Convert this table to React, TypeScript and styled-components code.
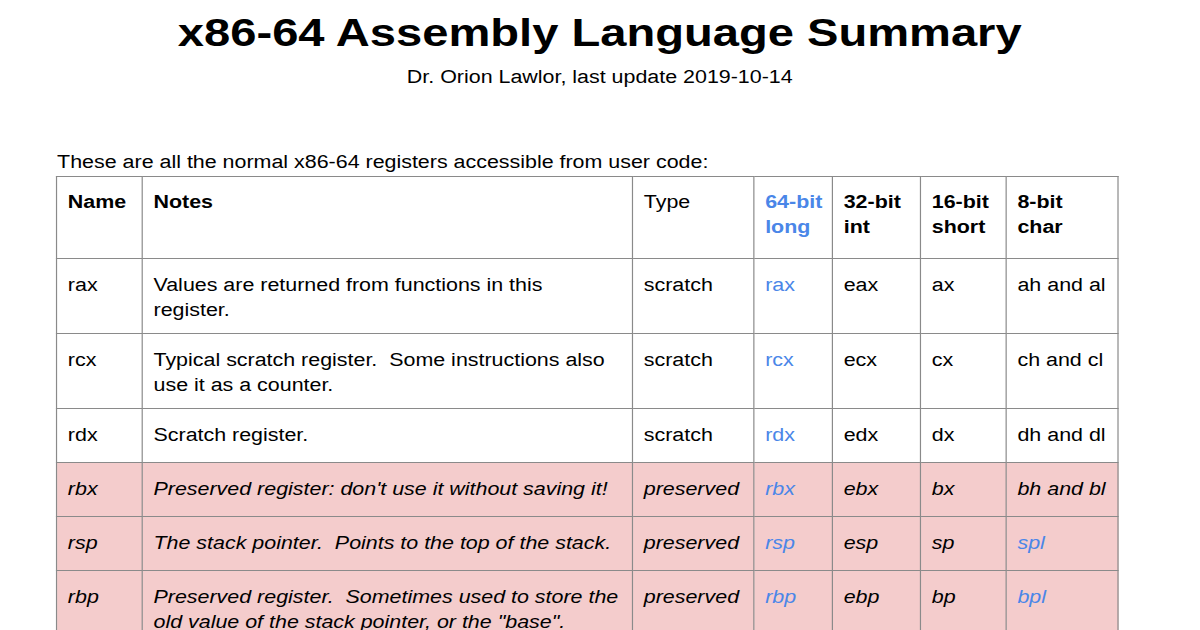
import React from 'react';
import styled, { createGlobalStyle } from 'styled-components';

// the reference is a stretched export: everything is laid out at natural size, then widened
const STRETCH = 1.19;

const GlobalStyle = createGlobalStyle`
  html, body {
    margin: 0;
    padding: 0;
    background: #ffffff;
    overflow: hidden;
  }
  body {
    font-family: 'Liberation Sans', Arial, sans-serif;
    color: #000000;
  }
`;

const Page = styled.div`
  width: 1008px;
  box-sizing: border-box;
  padding: 9px 0 0 47px;
  transform: scaleX(${STRETCH});
  transform-origin: 0 0;
`;

const Title = styled.h1`
  margin: 0 0 0 -47px;
  font-size: 39.6px;
  line-height: 46px;
  font-weight: 700;
  text-align: center;
`;

const Byline = styled.div`
  margin: 10px 0 0 -47px;
  font-size: 18px;
  line-height: 25px;
  text-align: center;
`;

const Intro = styled.p`
  margin: 60px 0 1px 1px;
  font-size: 18px;
  line-height: 25px;
`;

const Table = styled.table`
  width: 892px;
  table-layout: fixed;
  border-collapse: collapse;
  font-size: 18px;
  line-height: 25px;
`;

const Col = styled.col<{ $w: number }>`
  width: ${(p) => p.$w}px;
`;

const Row = styled.tr<{ $h: number; $preserved?: boolean }>`
  height: ${(p) => p.$h}px;
  background: ${(p) => (p.$preserved ? '#f4cccc' : '#ffffff')};
  font-style: ${(p) => (p.$preserved ? 'italic' : 'normal')};
`;

const Cell = styled.td<{ $blue?: boolean; $bold?: boolean }>`
  border: 1px solid #8a8a8a;
  padding: 14px 8px 0 9px;
  vertical-align: top;
  white-space: pre-wrap;
  color: ${(p) => (p.$blue ? '#4a86e8' : '#000000')};
  font-weight: ${(p) => (p.$bold ? 700 : 400)};
`;

const HeadCell = styled(Cell).attrs({ as: 'th' })`
  text-align: left;
  padding-top: 13px;
`;

type Reg = {
  name: string;
  notes: string;
  kind: string;
  r64: string;
  r32: string;
  r16: string;
  r8: string;
  r8Blue?: boolean;
  h: number;
};

const regs: Reg[] = [
  { name: 'rax', notes: 'Values are returned from functions in this register.', kind: 'scratch', r64: 'rax', r32: 'eax', r16: 'ax', r8: 'ah and al', h: 75 },
  { name: 'rcx', notes: 'Typical scratch register.  Some instructions also use it as a counter.', kind: 'scratch', r64: 'rcx', r32: 'ecx', r16: 'cx', r8: 'ch and cl', h: 75 },
  { name: 'rdx', notes: 'Scratch register.', kind: 'scratch', r64: 'rdx', r32: 'edx', r16: 'dx', r8: 'dh and dl', h: 54 },
  { name: 'rbx', notes: "Preserved register: don't use it without saving it!", kind: 'preserved', r64: 'rbx', r32: 'ebx', r16: 'bx', r8: 'bh and bl', h: 54 },
  { name: 'rsp', notes: 'The stack pointer.  Points to the top of the stack.', kind: 'preserved', r64: 'rsp', r32: 'esp', r16: 'sp', r8: 'spl', r8Blue: true, h: 54 },
  { name: 'rbp', notes: 'Preserved register.  Sometimes used to store the old value of the stack pointer, or the "base".', kind: 'preserved', r64: 'rbp', r32: 'ebp', r16: 'bp', r8: 'bpl', r8Blue: true, h: 75 },
];

const widths = [72, 412, 102, 66, 74, 72, 94];

const App = () => (
  <>
    <GlobalStyle />
    <Page>
      <Title>x86-64 Assembly Language Summary</Title>
      <Byline>Dr. Orion Lawlor, last update 2019-10-14</Byline>
      <Intro>These are all the normal x86-64 registers accessible from user code:</Intro>
      <Table>
        <colgroup>
          {widths.map((w, i) => (
            <Col key={i} $w={w} />
          ))}
        </colgroup>
        <thead>
          <Row $h={82}>
            <HeadCell $bold>Name</HeadCell>
            <HeadCell $bold>Notes</HeadCell>
            <HeadCell>Type</HeadCell>
            <HeadCell $bold $blue>
              64-bit long
            </HeadCell>
            <HeadCell $bold>32-bit int</HeadCell>
            <HeadCell $bold>16-bit short</HeadCell>
            <HeadCell $bold>8-bit char</HeadCell>
          </Row>
        </thead>
        <tbody>
          {regs.map((r) => (
            <Row key={r.name} $h={r.h} $preserved={r.kind === 'preserved'}>
              <Cell>{r.name}</Cell>
              <Cell>{r.notes}</Cell>
              <Cell>{r.kind}</Cell>
              <Cell $blue>{r.r64}</Cell>
              <Cell>{r.r32}</Cell>
              <Cell>{r.r16}</Cell>
              <Cell $blue={r.r8Blue}>{r.r8}</Cell>
            </Row>
          ))}
        </tbody>
      </Table>
    </Page>
  </>
);

export default App;
